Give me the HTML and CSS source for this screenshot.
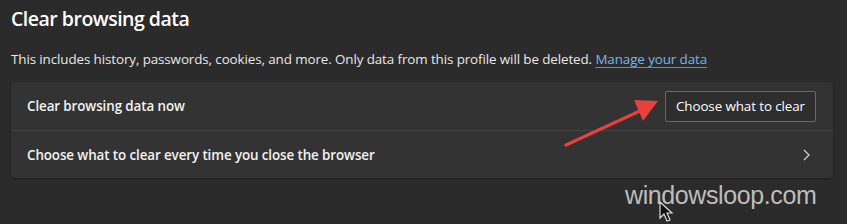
FILE: index.html
```html
<!DOCTYPE html>
<html>
<head>
<meta charset="utf-8">
<link rel="stylesheet" href="styles.css">
</head>
<body>
<div class="page">
  <h1 class="title">Clear browsing data</h1>
  <p class="desc">This includes history, passwords, cookies, and more. Only data from this profile will be deleted. <a class="link" href="#">Manage your data</a></p>
  <div class="card">
    <div class="row">
      <span class="label">Clear browsing data now</span>
      <button class="btn">Choose what to clear</button>
    </div>
    <div class="row row-link">
      <span class="label">Choose what to clear every time you close the browser</span>
      <svg class="chev" width="10" height="14" viewBox="0 0 10 14"><path d="M3 2 L8 7 L3 12" fill="none" stroke="#cfcfcf" stroke-width="1.3"/></svg>
    </div>
  </div>
</div>
<svg class="arrow" width="847" height="224" viewBox="0 0 847 224">
  <line x1="566" y1="145" x2="642" y2="110" stroke="#e8413c" stroke-width="3.2" stroke-linecap="round"/>
  <polygon points="658,101 634,100 643,121" fill="#e8413c"/>
</svg>
<div class="mark">windowsloop.com</div>
<svg class="cursor" width="16" height="22" viewBox="0 0 16 22"><path d="M1 1 L1 17 L5 13 L8 20 L11 19 L8 12 L13 12 Z" fill="#111" stroke="#ddd" stroke-width="1.2"/></svg>
</body>
</html>
```
FILE: styles.css
```css
html, body {
  margin: 0;
  padding: 0;
  background: #2b2b2b;
  width: 847px;
  height: 224px;
  overflow: hidden;
  font-family: "Open Sans", "Noto Sans", sans-serif;
  color: #ffffff;
}
.page {
  padding: 5px 14px 0 11px;
}
.title {
  margin: 0;
  font-size: 19.5px;
  font-weight: 600;
  line-height: 28px;
  letter-spacing: -0.5px;
}
.desc {
  margin: 16px 0 0 0;
  font-size: 13.4px;
  line-height: 20px;
  color: #e8e8e8;
  letter-spacing: -0.1px;
}
.link {
  color: #7ab4e8;
  text-decoration: underline;
  text-underline-offset: 3px;
  text-decoration-color: #5d8fbf;
}
.card {
  margin-top: 13px;
  width: 822px;
  background: #333333;
  border-radius: 4px;
  box-shadow: 0 1px 2px rgba(0,0,0,0.35);
}
.row {
  display: flex;
  align-items: center;
  justify-content: space-between;
  height: 48px;
  padding: 0 17px 0 16px;
  box-sizing: border-box;
}
.row + .row {
  border-top: 1px solid #454545;
  height: 48px;
}
.label {
  font-size: 13.4px;
  font-weight: 600;
  color: #f2f2f2;
  letter-spacing: -0.1px;
}
.btn {
  height: 31px;
  width: 151px;
  background: #2e2e2e;
  border: 1px solid #6a6a6a;
  border-radius: 2px;
  color: #ffffff;
  font-family: "Open Sans", "Noto Sans", sans-serif;
  font-size: 13.4px;
  padding: 0;
  letter-spacing: -0.1px;
}
.chev {
  margin-right: 5px;
}
.arrow {
  position: absolute;
  left: 0;
  top: 0;
}
.mark {
  position: absolute;
  left: 625px;
  top: 181px;
  font-family: "Liberation Sans", Arial, sans-serif;
  font-size: 25px;
  color: #bdbdbd;
  letter-spacing: -0.4px;
}
.cursor {
  position: absolute;
  left: 659px;
  top: 201px;
}
```
